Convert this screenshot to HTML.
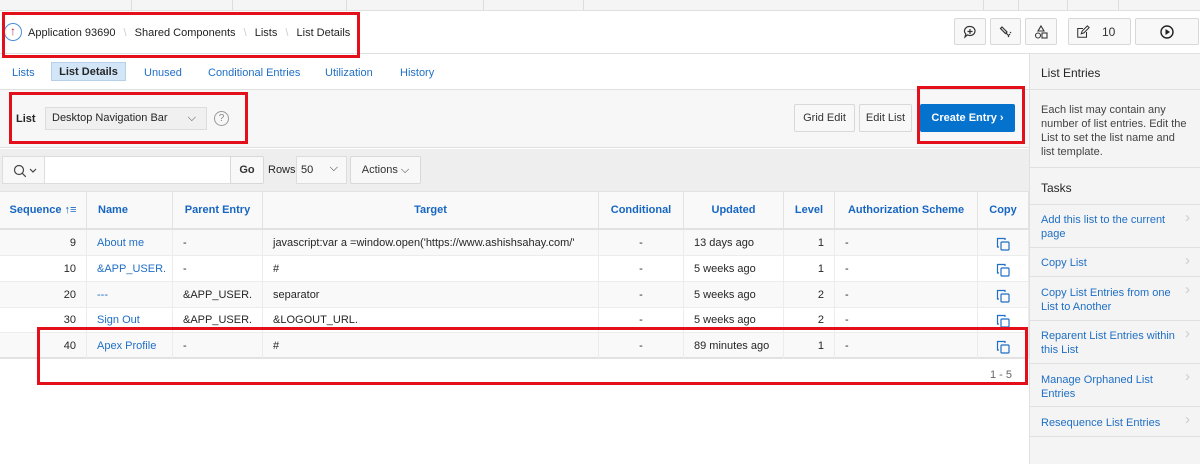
<!DOCTYPE html>
<html><head><meta charset="utf-8"><style>
*{box-sizing:border-box;margin:0;padding:0}
body{width:1200px;height:464px;overflow:hidden;background:#fff;font-family:"Liberation Sans",sans-serif;font-size:11px;color:#262626;position:relative}
.a{position:absolute}
.btn{position:absolute;background:#f8f8f8;border:1px solid #d8d8d8;border-radius:2px;display:flex;align-items:center;justify-content:center;color:#333}
.red{position:absolute;border:3px solid #e3101c}
.lnk{color:#1f6fc5}
.hd{position:absolute;top:192px;height:37px;line-height:37px;color:#1766c2;font-weight:bold;text-align:center;border-right:1px solid #e2e2e2}
.row{position:absolute;left:0;width:1029px;height:26px;border-bottom:1px solid #ececec}
.c{position:absolute;height:26px;line-height:26px;border-right:1px solid #ececec;padding:0 10px;white-space:nowrap;overflow:hidden}
.cp{text-align:center;padding-top:5px}
.task{position:absolute;left:1030px;width:170px;border-bottom:1px solid #e0e0e0;color:#1f6fc5;padding-left:11px;line-height:14px}
.task:after{content:"›";position:absolute;right:10px;top:6px;color:#ccc;font-size:15px}
</style></head><body>
<div class="a" style="left:0;top:0;width:1200px;height:11px;background:#f5f5f5;border-bottom:1px solid #e0e0e0"></div>
<div class="a" style="left:131px;top:0;width:1px;height:10px;background:#ddd"></div>
<div class="a" style="left:232px;top:0;width:1px;height:10px;background:#ddd"></div>
<div class="a" style="left:346px;top:0;width:1px;height:10px;background:#ddd"></div>
<div class="a" style="left:483px;top:0;width:1px;height:10px;background:#ddd"></div>
<div class="a" style="left:583px;top:0;width:1px;height:10px;background:#ddd"></div>
<div class="a" style="left:983px;top:0;width:1px;height:10px;background:#ddd"></div>
<div class="a" style="left:1018px;top:0;width:1px;height:10px;background:#ddd"></div>
<div class="a" style="left:1067px;top:0;width:1px;height:10px;background:#ddd"></div>
<div class="a" style="left:1118px;top:0;width:1px;height:10px;background:#ddd"></div>
<div class="a" style="left:0;top:53px;width:1200px;height:1px;background:#e0e0e0"></div>
<div class="a" style="left:4px;top:23px;width:18px;height:18px;border:1px solid #4a90d9;border-radius:50%;text-align:center;line-height:15px;color:#a03060;font-size:12px">↑</div>
<div class="a" style="left:28px;top:27px;font-size:11px;color:#222">Application 93690 <span style="color:#ccc;margin:0 5px">\</span> Shared Components <span style="color:#ccc;margin:0 5px">\</span> Lists <span style="color:#ccc;margin:0 5px">\</span> List Details</div>
<div class="red" style="left:2px;top:12px;width:358px;height:46px"></div>
<div class="btn" style="left:954px;top:18px;width:32px;height:27px"><svg width="16" height="16" viewBox="0 0 16 16" fill="none" stroke="#333" stroke-width="1.2"><path d="M8 2.5a5 4.5 0 1 1-2.5 8.4L3 13l.8-3A5 4.5 0 0 1 8 2.5z"/><path d="M8 5v5M5.5 7.5h5"/></svg></div>
<div class="btn" style="left:990px;top:18px;width:31px;height:27px"><svg width="16" height="16" viewBox="0 0 16 16" fill="none" stroke="#333" stroke-width="1.2"><path d="M4 3l5 5-1.5 1.5-5-5zM8 9l3 3M11 10l1 1M12 8l1 1M10 12l1 1"/></svg></div>
<div class="btn" style="left:1025px;top:18px;width:32px;height:27px"><svg width="16" height="16" viewBox="0 0 16 16" fill="none" stroke="#333" stroke-width="1.1"><path d="M8 2l3 5H5z"/><circle cx="5" cy="11.5" r="2.5"/><rect x="9" y="9" width="5" height="5"/></svg></div>
<div class="btn" style="left:1068px;top:18px;width:63px;height:27px;justify-content:flex-start;padding-left:7px"><svg width="14" height="14" viewBox="0 0 16 16" fill="none" stroke="#333" stroke-width="1.2"><path d="M12 8v6H2V4h6M6 10l1-3 6-6 2 2-6 6z"/></svg><span style="margin-left:12px;font-size:12px">10</span></div>
<div class="btn" style="left:1135px;top:18px;width:64px;height:27px"><svg width="16" height="16" viewBox="0 0 16 16"><circle cx="8" cy="8" r="6" fill="none" stroke="#222" stroke-width="1.4"/><path d="M6.5 5v6l4.5-3z" fill="#222"/></svg></div>
<div class="a" style="left:0;top:89px;width:1030px;height:1px;background:#e0e0e0"></div>
<div class="a lnk" style="left:12px;top:67px">Lists</div>
<div class="a" style="left:51px;top:62px;width:75px;height:19px;background:#d3e6f8;border:1px solid #b7d0ea;font-weight:bold;text-align:center;line-height:18px">List Details</div>
<div class="a lnk" style="left:144px;top:67px">Unused</div>
<div class="a lnk" style="left:208px;top:67px">Conditional Entries</div>
<div class="a lnk" style="left:325px;top:67px">Utilization</div>
<div class="a lnk" style="left:400px;top:67px">History</div>
<div class="a" style="left:0;top:90px;width:1030px;height:58px;background:#f7f7f7;border-bottom:1px solid #e0e0e0"></div>
<div class="a" style="left:16px;top:113px;font-weight:bold">List</div>
<div class="a" style="left:45px;top:107px;width:162px;height:23px;background:#f0f0f0;border:1px solid #ddd;padding-left:6px;line-height:21px">Desktop Navigation Bar<span style="position:absolute;right:10px;top:0;color:#444">⌵</span></div>
<div class="a" style="left:214px;top:111px;width:15px;height:15px;border:1px solid #999;border-radius:50%;text-align:center;line-height:13px;font-size:10px;color:#888">?</div>
<div class="red" style="left:9px;top:92px;width:239px;height:52px"></div>
<div class="btn" style="left:794px;top:104px;width:61px;height:28px">Grid Edit</div>
<div class="btn" style="left:859px;top:104px;width:53px;height:28px">Edit List</div>
<div class="btn" style="left:920px;top:104px;width:95px;height:28px;background:#0572ce;border-color:#0572ce;color:#fff;font-weight:bold">Create Entry ›</div>
<div class="red" style="left:917px;top:86px;width:108px;height:58px"></div>
<div class="a" style="left:0;top:149px;width:1030px;height:42px;background:#eeeeee"></div>
<div class="a" style="left:2px;top:156px;width:229px;height:28px;background:#fff;border:1px solid #ddd"></div>
<div class="a" style="left:2px;top:156px;width:43px;height:28px;background:#f8f8f8;border:1px solid #ddd;padding:7px 0 0 10px"><svg width="26" height="14" viewBox="0 0 26 14" fill="none" stroke="#444" stroke-width="1.2"><circle cx="6" cy="6" r="4.5"/><path d="M9.3 9.3l3.5 3.5M17 5l3 3 3-3"/></svg></div>
<div class="btn" style="left:230px;top:156px;width:34px;height:28px;font-weight:bold">Go</div>
<div class="a" style="left:268px;top:164px">Rows</div>
<div class="a" style="left:296px;top:156px;width:51px;height:28px;background:#f8f8f8;border:1px solid #ddd;padding:7px 0 0 4px">50<span style="position:absolute;right:8px;top:5px">⌵</span></div>
<div class="btn" style="left:350px;top:156px;width:71px;height:28px">Actions ⌵</div>
<div class="a" style="left:0;top:191px;width:1029px;height:39px;background:#f9f9f9;border-top:1px solid #e2e2e2;border-bottom:2px solid #e2e2e2"></div>
<div class="hd" style="left:0;width:87px">Sequence <span style="font-weight:normal">↑≡</span></div>
<div class="hd" style="left:87px;width:86px;text-align:left;padding-left:11px">Name</div>
<div class="hd" style="left:173px;width:90px">Parent Entry</div>
<div class="hd" style="left:263px;width:336px">Target</div>
<div class="hd" style="left:599px;width:85px">Conditional</div>
<div class="hd" style="left:684px;width:100px">Updated</div>
<div class="hd" style="left:784px;width:51px">Level</div>
<div class="hd" style="left:835px;width:143px">Authorization Scheme</div>
<div class="hd" style="left:978px;width:51px">Copy</div>
<div class="row" style="top:230px;background:#f9f9f9">
<div class="c" style="left:0;width:87px;text-align:right">9</div><div class="c lnk" style="left:87px;width:86px">About me</div><div class="c" style="left:173px;width:90px">-</div><div class="c" style="left:263px;width:336px">javascript:var a =window.open('https://www.ashishsahay.com/'</div><div class="c" style="left:599px;width:85px;text-align:center">-</div><div class="c" style="left:684px;width:100px">13 days ago</div><div class="c" style="left:784px;width:51px;text-align:right">1</div><div class="c" style="left:835px;width:143px">-</div><div class="c cp" style="left:978px;width:51px"><svg width="14" height="14" viewBox="0 0 14 14" fill="none" stroke="#1f6fc5" stroke-width="1.2"><rect x="5" y="5" width="8" height="8" rx="1"/><path d="M3 10H1.5V1.5H9V3"/></svg></div></div>
<div class="row" style="top:256px">
<div class="c" style="left:0;width:87px;text-align:right">10</div><div class="c lnk" style="left:87px;width:86px">&amp;APP_USER.</div><div class="c" style="left:173px;width:90px">-</div><div class="c" style="left:263px;width:336px">#</div><div class="c" style="left:599px;width:85px;text-align:center">-</div><div class="c" style="left:684px;width:100px">5 weeks ago</div><div class="c" style="left:784px;width:51px;text-align:right">1</div><div class="c" style="left:835px;width:143px">-</div><div class="c cp" style="left:978px;width:51px"><svg width="14" height="14" viewBox="0 0 14 14" fill="none" stroke="#1f6fc5" stroke-width="1.2"><rect x="5" y="5" width="8" height="8" rx="1"/><path d="M3 10H1.5V1.5H9V3"/></svg></div></div>
<div class="row" style="top:282px;background:#f9f9f9">
<div class="c" style="left:0;width:87px;text-align:right">20</div><div class="c lnk" style="left:87px;width:86px">---</div><div class="c" style="left:173px;width:90px">&amp;APP_USER.</div><div class="c" style="left:263px;width:336px">separator</div><div class="c" style="left:599px;width:85px;text-align:center">-</div><div class="c" style="left:684px;width:100px">5 weeks ago</div><div class="c" style="left:784px;width:51px;text-align:right">2</div><div class="c" style="left:835px;width:143px">-</div><div class="c cp" style="left:978px;width:51px"><svg width="14" height="14" viewBox="0 0 14 14" fill="none" stroke="#1f6fc5" stroke-width="1.2"><rect x="5" y="5" width="8" height="8" rx="1"/><path d="M3 10H1.5V1.5H9V3"/></svg></div></div>
<div class="row" style="top:307px">
<div class="c" style="left:0;width:87px;text-align:right">30</div><div class="c lnk" style="left:87px;width:86px">Sign Out</div><div class="c" style="left:173px;width:90px">&amp;APP_USER.</div><div class="c" style="left:263px;width:336px">&amp;LOGOUT_URL.</div><div class="c" style="left:599px;width:85px;text-align:center">-</div><div class="c" style="left:684px;width:100px">5 weeks ago</div><div class="c" style="left:784px;width:51px;text-align:right">2</div><div class="c" style="left:835px;width:143px">-</div><div class="c cp" style="left:978px;width:51px"><svg width="14" height="14" viewBox="0 0 14 14" fill="none" stroke="#1f6fc5" stroke-width="1.2"><rect x="5" y="5" width="8" height="8" rx="1"/><path d="M3 10H1.5V1.5H9V3"/></svg></div></div>
<div class="row" style="top:333px;background:#f9f9f9;border-bottom:2px solid #e2e2e2">
<div class="c" style="left:0;width:87px;text-align:right">40</div><div class="c lnk" style="left:87px;width:86px">Apex Profile</div><div class="c" style="left:173px;width:90px">-</div><div class="c" style="left:263px;width:336px">#</div><div class="c" style="left:599px;width:85px;text-align:center">-</div><div class="c" style="left:684px;width:100px">89 minutes ago</div><div class="c" style="left:784px;width:51px;text-align:right">1</div><div class="c" style="left:835px;width:143px">-</div><div class="c cp" style="left:978px;width:51px"><svg width="14" height="14" viewBox="0 0 14 14" fill="none" stroke="#1f6fc5" stroke-width="1.2"><rect x="5" y="5" width="8" height="8" rx="1"/><path d="M3 10H1.5V1.5H9V3"/></svg></div></div>
<div class="a" style="left:990px;top:369px;color:#666">1 - 5</div>
<div class="red" style="left:37px;top:327px;width:991px;height:58px"></div>
<div class="a" style="left:1029px;top:54px;width:171px;height:410px;background:#f4f4f4;border-left:1px solid #e0e0e0"></div>
<div class="a" style="left:1041px;top:66px;font-size:12px">List Entries</div>
<div class="a" style="left:1030px;top:89px;width:170px;height:1px;background:#e0e0e0"></div>
<div class="a" style="left:1041px;top:103px;width:150px;line-height:14px;color:#444">Each list may contain any number of list entries. Edit the List to set the list name and list template.</div>
<div class="a" style="left:1030px;top:167px;width:170px;height:1px;background:#e0e0e0"></div>
<div class="a" style="left:1041px;top:181px;font-size:12px">Tasks</div>
<div class="a" style="left:1030px;top:204px;width:170px;height:1px;background:#e0e0e0"></div>
<div class="task" style="top:205px;height:43px;padding-top:8px">Add this list to the current<br>page</div>
<div class="task" style="top:248px;height:29px;padding-top:8px">Copy List</div>
<div class="task" style="top:277px;height:44px;padding-top:9px">Copy List Entries from one<br>List to Another</div>
<div class="task" style="top:321px;height:43px;padding-top:8px">Reparent List Entries within<br>this List</div>
<div class="task" style="top:364px;height:43px;padding-top:9px">Manage Orphaned List<br>Entries</div>
<div class="task" style="top:407px;height:30px;padding-top:9px">Resequence List Entries</div>
</body></html>
